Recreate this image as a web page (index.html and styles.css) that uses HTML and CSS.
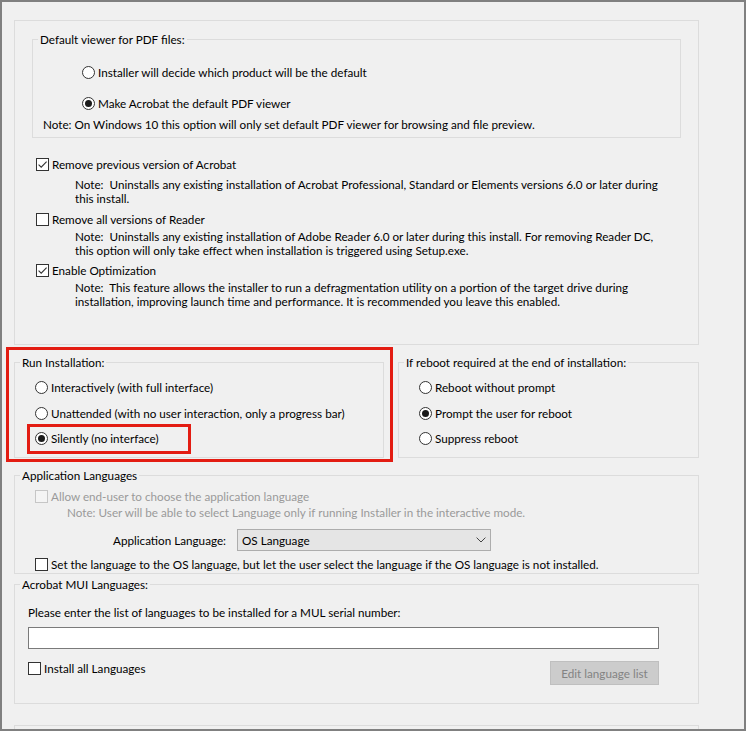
FILE: index.html
```html
<!DOCTYPE html>
<html lang="en">
<head>
<meta charset="utf-8">
<title>Installation options</title>
<link rel="stylesheet" href="styles.css">
</head>
<body>
<div class="window">
  <fieldset class="main">
    <fieldset class="pdf-group">
      <legend>Default viewer for PDF files:</legend>
      <div class="opt"><span class="radio"></span>Installer will decide which product will be the default</div>
      <div class="opt r2"><span class="radio on"></span>Make Acrobat the default PDF viewer</div>
      <div class="pdf-note">Note: On Windows 10 this option will only set default PDF viewer for browsing and file preview.</div>
    </fieldset>

    <div class="opt cb cb1"><span class="check"><svg viewBox="0 0 11 11"><path d="M1.6 5.6 L4.2 8.2 L9.6 2.6" fill="none" stroke="#333" stroke-width="1.1"/></svg></span>Remove previous version of Acrobat</div>
    <div class="note n1">Note:&nbsp; Uninstalls any existing installation of Acrobat Professional, Standard or Elements versions 6.0 or later during<br>this install.</div>

    <div class="opt cb cb2"><span class="check"></span>Remove all versions of Reader</div>
    <div class="note n2">Note:&nbsp; Uninstalls any existing installation of Adobe Reader 6.0 or later during this install. For removing Reader DC,<br>this option will only take effect when installation is triggered using Setup.exe.</div>

    <div class="opt cb cb3"><span class="check"><svg viewBox="0 0 11 11"><path d="M1.6 5.6 L4.2 8.2 L9.6 2.6" fill="none" stroke="#333" stroke-width="1.1"/></svg></span>Enable Optimization</div>
    <div class="note n2">Note:&nbsp; This feature allows the installer to run a defragmentation utility on a portion of the target drive during<br>installation, improving launch time and performance. It is recommended you leave this enabled.</div>
  </fieldset>

  <div class="row">
    <div class="run-wrap">
      <fieldset class="radio-group">
        <legend>Run Installation:</legend>
        <div class="opt"><span class="radio"></span>Interactively (with full interface)</div>
        <div class="opt g2"><span class="radio"></span>Unattended (with no user interaction, only a progress bar)</div>
        <div class="opt g3"><span class="radio on"></span>Silently (no interface)</div>
      </fieldset>
      <div class="hl hl-outer"></div>
      <div class="hl hl-inner"></div>
    </div>
    <fieldset class="radio-group reboot">
      <legend>If reboot required at the end of installation:</legend>
      <div class="opt"><span class="radio"></span>Reboot without prompt</div>
      <div class="opt g2"><span class="radio on"></span>Prompt the user for reboot</div>
      <div class="opt g3"><span class="radio"></span>Suppress reboot</div>
    </fieldset>
  </div>

  <fieldset class="app">
    <legend>Application Languages</legend>
    <div class="opt cbA gray"><span class="check disabled"></span>Allow end-user to choose the application language</div>
    <div class="note gray app-note">Note: User will be able to select Language only if running Installer in the interactive mode.</div>
    <div class="langrow">
      <span class="lbl">Application Language:</span>
      <div class="select"><span>OS Language</span><svg class="chev" viewBox="0 0 10 6"><path d="M0.6 0.6 L5 5 L9.4 0.6" fill="none" stroke="#444" stroke-width="1"/></svg></div>
    </div>
    <div class="opt cbB"><span class="check"></span>Set the language to the OS language, but let the user select the language if the OS language is not installed.</div>
  </fieldset>

  <fieldset class="mui">
    <legend>Acrobat MUI Languages:</legend>
    <div class="opt prompt">Please enter the list of languages to be installed for a MUL serial number:</div>
    <div class="textbox"></div>
    <div class="mui-row">
      <div class="opt"><span class="check"></span>Install all Languages</div>
      <div class="btn">Edit language list</div>
    </div>
  </fieldset>

  <fieldset class="tail"></fieldset>
</div>
</body>
</html>
```

FILE: styles.css
```css
* { box-sizing: border-box; }
html, body { margin: 0; padding: 0; background: #f0f0f0; }
body {
  font-family: Lato, "Noto Sans", sans-serif;
  font-size: 11.7px;
  color: #000;
}
.window {
  width: 746px;
  height: 731px;
  border: 2px solid #808080;
  background: #f0f0f0;
  overflow: hidden;
  padding: 18px 45px 0 12px;
}
fieldset {
  margin: 0;
  padding: 0;
  border: 1px solid #dcdcdc;
  min-width: 0;
}
legend {
  margin-left: 5px;
  padding: 0 2px;
  height: 16px;
  line-height: 16px;
  color: #000;
}
.opt {
  display: flex;
  align-items: center;
  height: 16px;
  line-height: 16px;
  white-space: nowrap;
}
.radio {
  flex: none;
  width: 13px;
  height: 13px;
  margin-right: 3px;
  border: 1px solid #333;
  border-radius: 50%;
  background: #fff;
  display: flex;
  align-items: center;
  justify-content: center;
}
.radio.on::after {
  content: "";
  width: 7px;
  height: 7px;
  border-radius: 50%;
  background: #1a1a1a;
}
.check {
  flex: none;
  width: 13px;
  height: 13px;
  margin-right: 3px;
  border: 1px solid #333;
  background: #fff;
  display: flex;
}
.check svg { width: 11px; height: 11px; }
.check.disabled { border-color: #c6c6c6; background: #f4f4f4; }
.note { line-height: 14px; white-space: nowrap; }
.gray { color: #9a9a9a; }

/* main group */
.main { padding: 10px 0 36px; }
.pdf-group { margin: 0 17px; padding: 17px 0 5px; }
.pdf-group .opt { margin-left: 49px; }
.pdf-group .r2 { margin-top: 15px; }
.pdf-note { margin: 5px 0 0 10px; line-height: 16px; white-space: nowrap; }
.main > .cb { margin-left: 21px; }
.main > .note { margin-left: 60px; }
.cb1 { margin-top: 18px; }
.n1 { margin-top: 5px; }
.cb2 { margin-top: 6px; }
.n2 { margin-top: 2px; }
.cb3 { margin-top: 5px; }

/* run / reboot */
.row { display: flex; gap: 14px; margin-top: 9px; }
.run-wrap { position: relative; width: 370px; display: flex; }
.run-wrap .radio-group { flex: 1; }
.radio-group { padding: 9px 0 11px; }
.radio-group .opt { margin-left: 20px; }
.radio-group .g2 { margin-top: 10px; }
.radio-group .g3 { margin-top: 9px; }
.reboot { flex: 1; }
.hl { position: absolute; border: 3px solid #e31c12; }
.hl-outer { left: -8px; top: -7px; width: 387px; height: 115px; }
.hl-inner { left: 13px; top: 70px; width: 164px; height: 30px; }

/* application languages */
.app { margin-top: 9px; padding: 5px 0 1px; }
.cbA { margin-left: 20px; }
.app-note { margin: 1px 0 0 52px; }
.langrow { display: flex; align-items: center; height: 22px; margin: 10px 0 0 98px; }
.lbl { width: 124px; white-space: nowrap; }
.select {
  width: 254px;
  height: 22px;
  border: 1px solid #adadad;
  background: #e5e5e5;
  display: flex;
  align-items: center;
  justify-content: space-between;
  padding: 0 4px 0 4px;
}
.chev { width: 10px; height: 6px; }
.cbB { margin: 5px 0 0 20px; }

/* MUI */
.mui { margin-top: 2px; padding: 12px 0 18px; }
.prompt { margin-left: 13px; }
.textbox {
  margin: 7px 0 0 13px;
  width: 631px;
  height: 22px;
  background: #fff;
  border: 1px solid #7a7a7a;
}
.mui-row {
  display: flex;
  justify-content: space-between;
  align-items: flex-start;
  margin: 11px 0 0 13px;
  width: 631px;
}
.btn {
  margin-top: 1px;
  width: 109px;
  height: 24px;
  background: #cccccc;
  border: 1px solid #bfbfbf;
  color: #838383;
  display: flex;
  align-items: center;
  justify-content: center;
}
.tail { margin-top: 21px; height: 40px; }
```
